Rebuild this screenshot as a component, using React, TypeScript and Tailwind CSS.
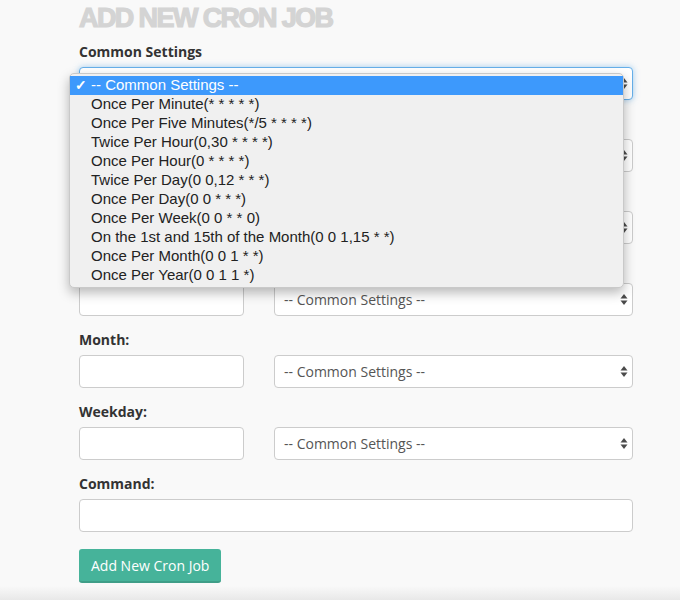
import React from 'react';

const options = [
  '-- Common Settings --',
  'Once Per Minute(* * * * *)',
  'Once Per Five Minutes(*/5 * * * *)',
  'Twice Per Hour(0,30 * * * *)',
  'Once Per Hour(0 * * * *)',
  'Twice Per Day(0 0,12 * * *)',
  'Once Per Day(0 0 * * *)',
  'Once Per Week(0 0 * * 0)',
  'On the 1st and 15th of the Month(0 0 1,15 * *)',
  'Once Per Month(0 0 1 * *)',
  'Once Per Year(0 0 1 1 *)',
];

const fields = ['Minute:', 'Hour:', 'Day:', 'Month:', 'Weekday:'];

const Arrows: React.FC = () => (
  <svg width="8" height="13" viewBox="0 0 8 13" className="shrink-0">
    <path d="M4 1 L7.5 5.5 H0.5 Z" fill="#4a4a4a" />
    <path d="M4 12 L7.5 7.5 H0.5 Z" fill="#4a4a4a" />
  </svg>
);

const SelectBox: React.FC<{ focused?: boolean }> = ({ focused }) => (
  <div
    className={`flex h-[33px] flex-1 items-center justify-between rounded-[4px] border bg-white pl-[9px] pr-[4px] text-[14px] text-[#555] ${
      focused
        ? 'border-[#66afe9] shadow-[0_0_6px_rgba(102,175,233,0.6)]'
        : 'border-[#ccc]'
    }`}
  >
    <span>-- Common Settings --</span>
    <Arrows />
  </div>
);

const Label: React.FC<{ children: React.ReactNode }> = ({ children }) => (
  <div className="mb-[5px] text-[14px] font-bold leading-[20px] text-[#333]">{children}</div>
);

const App: React.FC = () => {
  return (
    <div className="flex min-h-[600px] flex-col bg-[#f9f9f9] font-['Open_Sans',sans-serif]">
      <div className="relative pl-[79px] pr-[47px]">
        {/* Title */}
        <h1 className="h-[42px] pt-[3px] font-['Liberation_Sans',sans-serif] text-[27px] font-black leading-[30px] tracking-[-1.6px] text-[#d4d4d4] [-webkit-text-stroke:1.2px_#d4d4d4]">
          ADD NEW CRON JOB
        </h1>

        <div className="mb-[14px]">
          <Label>Common Settings</Label>
          <SelectBox focused />
        </div>

        {fields.map((f) => (
          <div key={f} className="mb-[14px]">
            <Label>{f}</Label>
            <div className="flex gap-[30px]">
              <div className="h-[33px] w-[165px] rounded-[4px] border border-[#ccc] bg-white" />
              <SelectBox />
            </div>
          </div>
        ))}

        <div className="mb-[17px]">
          <Label>Command:</Label>
          <div className="h-[33px] rounded-[4px] border border-[#ccc] bg-white" />
        </div>

        <button className="h-[34px] rounded-[3px] border-b-2 border-[#3f9e88] bg-[#46b39a] px-[12px] text-[14px] text-white">
          Add New Cron Job
        </button>

        {/* Open native dropdown menu */}
        <div className="absolute left-[69px] top-[73px] w-[555px] rounded-[5px] border border-[#c9c9c9] bg-[#f0f0f0] py-[2px] font-['Liberation_Sans',sans-serif] text-[15px] text-[#222] shadow-[0_5px_12px_rgba(0,0,0,0.28)]">
          {options.map((o, i) => (
            <div
              key={o}
              className={`relative flex h-[19px] items-center pl-[21px] ${
                i === 0 ? 'bg-[#3d99fc] text-white' : ''
              }`}
            >
              {i === 0 && <span className="absolute left-[5px] text-[14px] font-bold">✓</span>}
              {o}
            </div>
          ))}
        </div>
      </div>
      <div className="mt-auto h-[14px] bg-gradient-to-b from-[#f9f9f9] to-[#e8e8e8]" />
    </div>
  );
};

export default App;
